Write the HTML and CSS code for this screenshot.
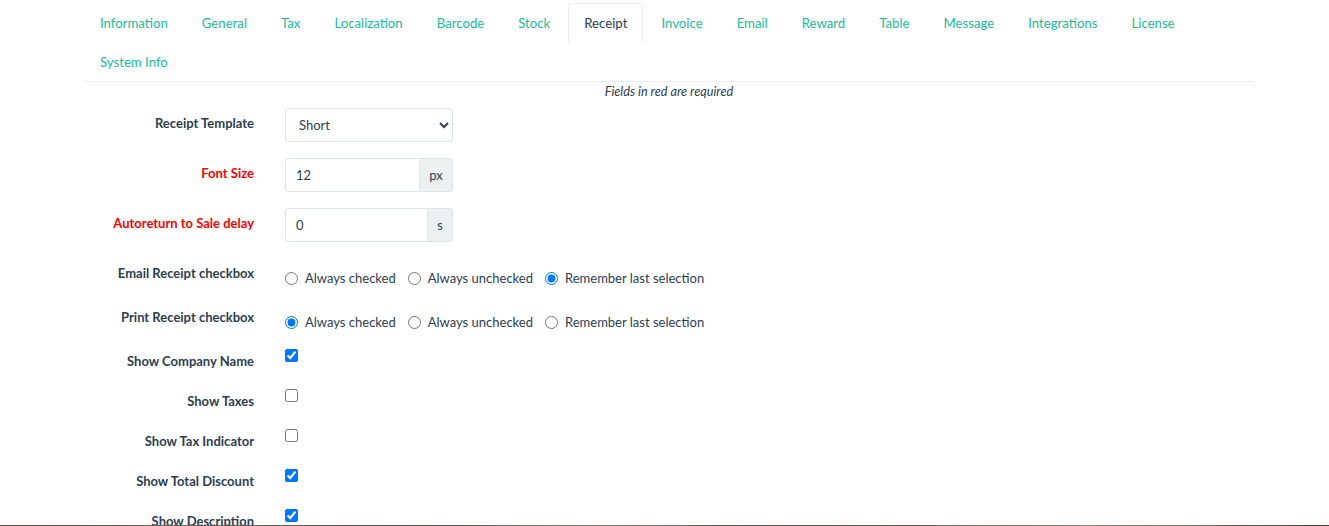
FILE: index.html
```html
<!DOCTYPE html>
<html lang="en">
<head>
<meta charset="utf-8">
<title>Config - Receipt</title>
<link rel="stylesheet" href="styles.css">
</head>
<body>
<div class="page">
  <div class="container">
    <ul class="nav-tabs">
      <li class="tab"><a>Information</a></li>
      <li class="tab"><a>General</a></li>
      <li class="tab"><a>Tax</a></li>
      <li class="tab"><a>Localization</a></li>
      <li class="tab"><a>Barcode</a></li>
      <li class="tab"><a>Stock</a></li>
      <li class="tab active"><a>Receipt</a></li>
      <li class="tab"><a>Invoice</a></li>
      <li class="tab"><a>Email</a></li>
      <li class="tab"><a>Reward</a></li>
      <li class="tab"><a>Table</a></li>
      <li class="tab"><a>Message</a></li>
      <li class="tab"><a>Integrations</a></li>
      <li class="tab"><a>License</a></li>
      <li class="tab"><a>System Info</a></li>
    </ul>

    <p class="required-note">Fields in red are required</p>

    <form class="settings">
      <div class="form-row">
        <label class="form-label">Receipt Template</label>
        <select class="select">
          <option>Short</option>
          <option>Default</option>
        </select>
      </div>

      <div class="form-row">
        <label class="form-label required">Font Size</label>
        <div class="input-group wide">
          <input class="input" type="text" value="12">
          <span class="addon">px</span>
        </div>
      </div>

      <div class="form-row">
        <label class="form-label required">Autoreturn to Sale delay</label>
        <div class="input-group narrow">
          <input class="input" type="text" value="0">
          <span class="addon">s</span>
        </div>
      </div>

      <div class="form-row radio-row">
        <label class="form-label">Email Receipt checkbox</label>
        <div class="radio-group">
          <label class="radio"><input type="radio" name="email">Always checked</label>
          <label class="radio"><input type="radio" name="email">Always unchecked</label>
          <label class="radio"><input type="radio" name="email" checked>Remember last selection</label>
        </div>
      </div>

      <div class="form-row radio-row">
        <label class="form-label">Print Receipt checkbox</label>
        <div class="radio-group">
          <label class="radio"><input type="radio" name="print" checked>Always checked</label>
          <label class="radio"><input type="radio" name="print">Always unchecked</label>
          <label class="radio"><input type="radio" name="print">Remember last selection</label>
        </div>
      </div>

      <div class="form-row check-row">
        <label class="form-label">Show Company Name</label>
        <div><input class="check" type="checkbox" checked></div>
      </div>

      <div class="form-row check-row">
        <label class="form-label">Show Taxes</label>
        <div><input class="check" type="checkbox"></div>
      </div>

      <div class="form-row check-row">
        <label class="form-label">Show Tax Indicator</label>
        <div><input class="check" type="checkbox"></div>
      </div>

      <div class="form-row check-row">
        <label class="form-label">Show Total Discount</label>
        <div><input class="check" type="checkbox" checked></div>
      </div>

      <div class="form-row check-row">
        <label class="form-label">Show Description</label>
        <div><input class="check" type="checkbox" checked></div>
      </div>

      <div class="form-row check-row">
        <label class="form-label">Show Serial Number</label>
        <div><input class="check" type="checkbox"></div>
      </div>
    </form>
  </div>
</div>
<div class="bottom-strip"></div>
</body>
</html>
```

FILE: styles.css
```css
* {
  box-sizing: border-box;
}

html, body {
  margin: 0;
  padding: 0;
  background: #ffffff;
  overflow: hidden;
}

body {
  font-family: Lato, "Open Sans", "Liberation Sans", sans-serif;
  color: #2c3e50;
  font-size: 13px;
}

.page {
  height: 525px;
  overflow: hidden;
}

.container {
  width: 1170px;
  margin-left: 84px;
}

.nav-tabs {
  list-style: none;
  margin: 3px 0 0 0;
  padding: 0;
  display: flex;
  flex-wrap: wrap;
  border-bottom: 1px solid #ecf0f1;
}

.tab {
  margin: 0 2px -1px 0;
}

.tab a {
  display: block;
  padding: 10px 15px;
  border: 1px solid transparent;
  border-radius: 4px 4px 0 0;
  font-size: 13.2px;
  line-height: 18px;
  color: #18bc9c;
}

.tab.active a {
  color: #2c3e50;
  border-color: #ecf0f1;
  border-bottom-color: transparent;
  background: #ffffff;
}

.required-note {
  margin: 1px 0 8px 0;
  text-align: center;
  font-size: 12.7px;
  line-height: 17px;
  font-style: italic;
  color: #2c3e50;
}

.settings {
  display: flex;
  flex-direction: column;
}

.form-row {
  display: grid;
  grid-template-columns: 170px auto;
  column-gap: 31px;
  justify-content: start;
  align-items: start;
  margin-bottom: 16px;
}

.form-label {
  text-align: right;
  font-weight: bold;
  font-size: 13px;
  line-height: 17px;
  padding-top: 7px;
  color: #2c3e50;
}

.form-label.required {
  color: #ff0000;
}

.select {
  width: 168px;
  height: 34px;
  border: 1px solid #dce4ec;
  border-radius: 3px;
  padding: 0 6px 0 9px;
  font-family: Lato, "Open Sans", sans-serif;
  font-size: 13px;
  color: #2c3e50;
  background: #ffffff;
}

.input-group {
  display: flex;
  height: 34px;
  width: 168px;
}

.input {
  flex: 1;
  min-width: 0;
  height: 34px;
  border: 1px solid #dce4ec;
  border-radius: 3px 0 0 3px;
  padding: 0 10px;
  font-family: Lato, "Open Sans", sans-serif;
  font-size: 13px;
  color: #2c3e50;
  outline: none;
}

.input-group.wide .addon {
  width: 33px;
}

.input-group.narrow .addon {
  width: 25px;
}

.addon {
  display: flex;
  align-items: center;
  justify-content: center;
  background: #ecf0f1;
  border: 1px solid #dce4ec;
  border-left: none;
  border-radius: 0 3px 3px 0;
  font-size: 13px;
  color: #2c3e50;
}

.radio-group {
  display: flex;
  gap: 12px;
  padding-top: 12px;
}

.radio {
  display: flex;
  align-items: center;
  gap: 7px;
  font-size: 13px;
  line-height: 16px;
  color: #2c3e50;
}

.radio input {
  margin: 0;
  width: 13px;
  height: 13px;
}

.check {
  margin: 3px 0 0 0;
  width: 13px;
  height: 13px;
  display: block;
}

.bottom-strip {
  height: 1px;
  background: linear-gradient(90deg, #5b4a3c 0%, #7a6650 15%, #4e4a47 30%, #8a7a6a 45%, #5a5450 55%, #6d5c48 70%, #9a8466 82%, #4a3e33 100%);
}
```
